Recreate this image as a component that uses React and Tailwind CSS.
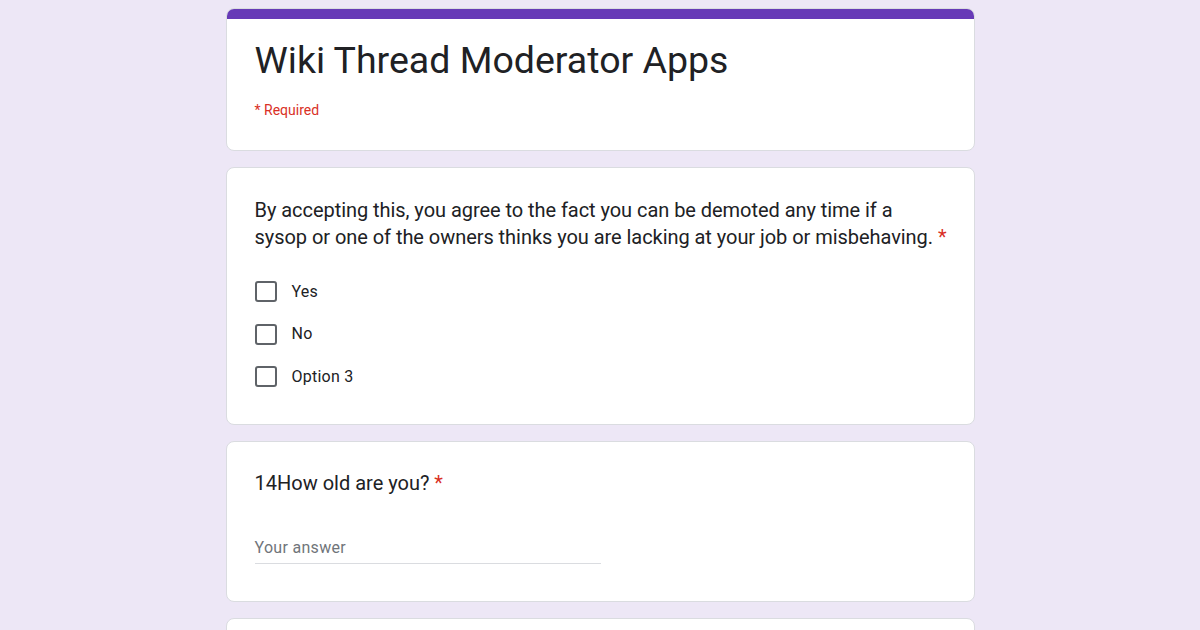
export default function App() {
  const options = ['Yes', 'No', 'Option 3'];

  return (
    <div className="min-h-screen w-full bg-[#ede7f6] pt-2 font-['Roboto',sans-serif] text-[#202124]">
      <div className="mx-auto flex w-[749px] flex-col gap-4">
        {/* Header card */}
        <div className="overflow-hidden rounded-lg border border-[#dadce0] bg-white">
          <div className="h-[10px] bg-[#673ab7]" />
          <div className="px-[28px] pt-[17px] pb-[30px]">
            <h1 className="text-[37.5px] leading-[48px] text-[#202124]">Wiki Thread Moderator Apps</h1>
            <div className="mt-[16px] text-[14px] leading-5 text-[#d93025]">* Required</div>
          </div>
        </div>

        {/* Agreement question */}
        <div className="rounded-lg border border-[#dadce0] bg-white px-[28px] pt-[29px] pb-[37px]">
          <div className="whitespace-nowrap text-[20px] leading-[27px] tracking-[-0.05px]">
            By accepting this, you agree to the fact you can be demoted any time if a
            <br />
            sysop or one of the owners thinks you are lacking at your job or misbehaving.{' '}
            <span className="text-[#d93025]">*</span>
          </div>
          <div className="mt-[30px] flex flex-col gap-[21.5px]">
            {options.map((o) => (
              <div key={o} className="flex items-center">
                <div className="h-[21px] w-[22px] rounded-[3px] border-2 border-[#5f6368]" />
                <span className="ml-[15px] text-[16px] leading-5 tracking-[0.25px]">{o}</span>
              </div>
            ))}
          </div>
        </div>

        {/* Age question */}
        <div className="rounded-lg border border-[#dadce0] bg-white px-[28px] pt-[28px] pb-[37px]">
          <div className="text-[20px] leading-[27px]">
            14How old are you? <span className="text-[#d93025]">*</span>
          </div>
          <div className="mt-[41px] w-[346px] border-b border-[#dadce0] pb-[5px] text-[16px] leading-5 tracking-[0.3px] text-[#70757a]">
            Your answer
          </div>
        </div>

        {/* Next card (cut off) */}
        <div className="h-[60px] rounded-lg border border-[#dadce0] bg-white" />
      </div>
    </div>
  );
}
